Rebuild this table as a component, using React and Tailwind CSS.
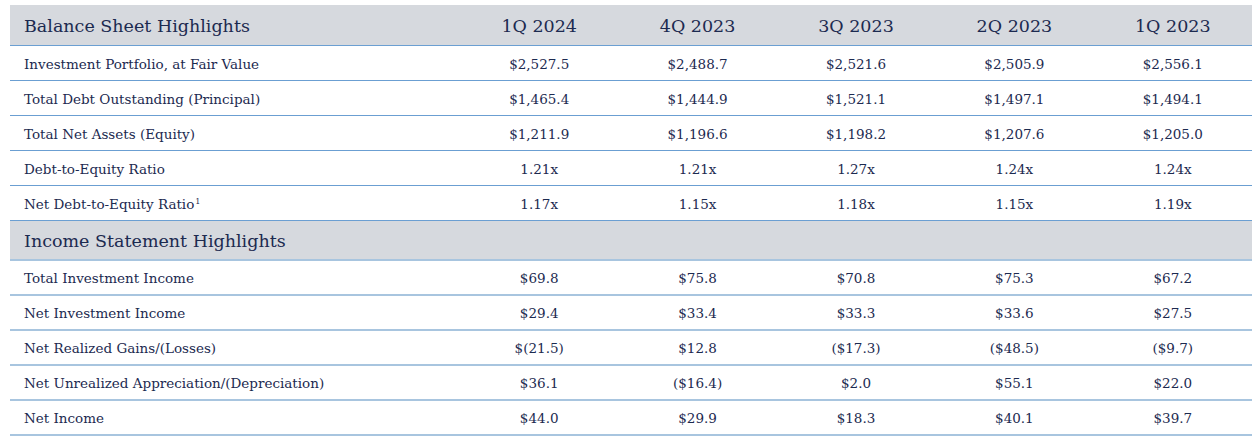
const balance = [
  ['Investment Portfolio, at Fair Value', '$2,527.5', '$2,488.7', '$2,521.6', '$2,505.9', '$2,556.1'],
  ['Total Debt Outstanding (Principal)', '$1,465.4', '$1,444.9', '$1,521.1', '$1,497.1', '$1,494.1'],
  ['Total Net Assets (Equity)', '$1,211.9', '$1,196.6', '$1,198.2', '$1,207.6', '$1,205.0'],
  ['Debt-to-Equity Ratio', '1.21x', '1.21x', '1.27x', '1.24x', '1.24x'],
  ['Net Debt-to-Equity Ratio', '1.17x', '1.15x', '1.18x', '1.15x', '1.19x'],
];

const income = [
  ['Total Investment Income', '$69.8', '$75.8', '$70.8', '$75.3', '$67.2'],
  ['Net Investment Income', '$29.4', '$33.4', '$33.3', '$33.6', '$27.5'],
  ['Net Realized Gains/(Losses)', '$(21.5)', '$12.8', '($17.3)', '($48.5)', '($9.7)'],
  ['Net Unrealized Appreciation/(Depreciation)', '$36.1', '($16.4)', '$2.0', '$55.1', '$22.0'],
  ['Net Income', '$44.0', '$29.9', '$18.3', '$40.1', '$39.7'],
];

const quarters = ['1Q 2024', '4Q 2023', '3Q 2023', '2Q 2023', '1Q 2023'];

function Row({ row, line, sup }) {
  return (
    <div className={`grid grid-cols-[450px_repeat(5,1fr)] h-[35px] items-center text-[13.5px] pt-[2px] ${line}`}>
      <div className="pl-[14px]">
        {row[0]}
        {sup && <span className="text-[8px] relative -top-[5px] ml-px">1</span>}
      </div>
      {row.slice(1).map((v, i) => (
        <div key={i} className="text-center">{v}</div>
      ))}
    </div>
  );
}

export default function App() {
  return (
    <div className="bg-white w-[1253px] h-[438px] pt-[5px] pl-[10px] pr-px font-['DejaVu_Serif',serif] text-[#1c2a50]">
      <div className="grid grid-cols-[450px_repeat(5,1fr)] h-[41px] items-center bg-[#d6d9de] border-b border-[#6b9fd2] text-[17.5px] pt-[3px]">
        <div className="pl-[14px]">Balance Sheet Highlights</div>
        {quarters.map((q) => (
          <div key={q} className="text-center">{q}</div>
        ))}
      </div>
      {balance.map((r, i) => (
        <Row
          key={r[0]}
          row={r}
          sup={i === 4}
          line={i === 4 ? 'border-b border-[#eef0f3]' : 'border-b border-[#6b9fd2]'}
        />
      ))}
      <div className="h-[41px] flex items-center bg-[#d6d9de] border-t border-[#6b9fd2] border-b-2 border-b-[#a8c5df] text-[17.5px] pt-[2px] -mt-px">
        <div className="pl-[14px]">Income Statement Highlights</div>
      </div>
      {income.map((r) => (
        <Row key={r[0]} row={r} line="border-b-2 border-[#a8c5df]" />
      ))}
    </div>
  );
}
